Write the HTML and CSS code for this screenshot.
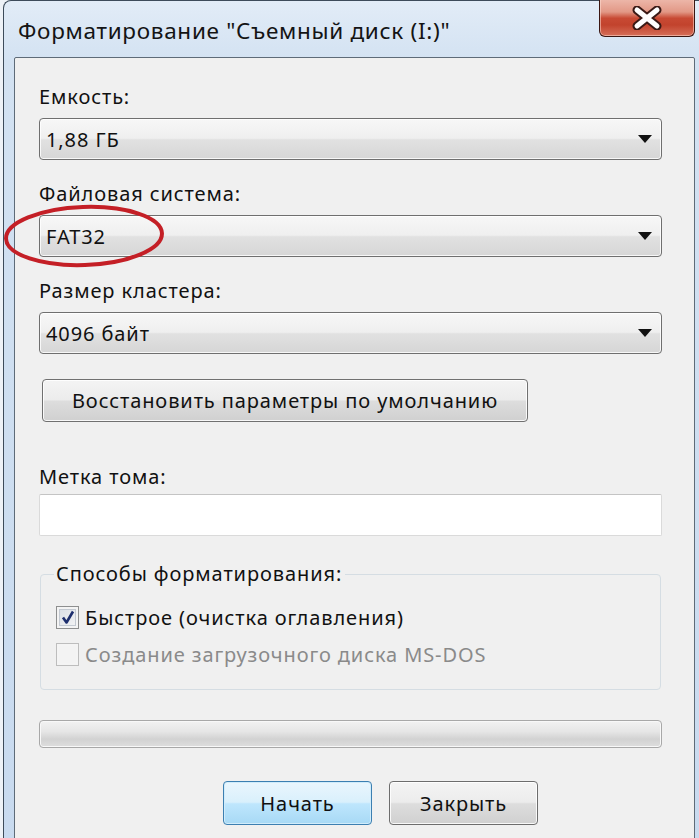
FILE: index.html
```html
<!DOCTYPE html>
<html lang="ru">
<head>
<meta charset="utf-8">
<title>Форматирование</title>
<link rel="stylesheet" href="styles.css">
</head>
<body>
<div class="window">
  <div class="titlebar">
    <div class="title">Форматирование "Съемный диск (I:)"</div>
    <div class="close">
      <svg width="32" height="24" viewBox="0 0 32 24">
        <path d="M6 4 L26 20 M26 4 L6 20" stroke="#3a1a16" stroke-width="9" stroke-linecap="round"/>
        <path d="M6 4 L26 20 M26 4 L6 20" stroke="#ffffff" stroke-width="5" stroke-linecap="round"/>
      </svg>
    </div>
  </div>
  <div class="panel">
    <div class="label first">Емкость:</div>
    <div class="combo"><span class="value">1,88 ГБ</span><span class="arrow"></span></div>

    <div class="label">Файловая система:</div>
    <div class="combo"><span class="value">FAT32</span><span class="arrow"></span></div>

    <div class="label">Размер кластера:</div>
    <div class="combo"><span class="value">4096 байт</span><span class="arrow"></span></div>

    <div class="btn restore">Восстановить параметры по умолчанию</div>

    <div class="label volume">Метка тома:</div>
    <div class="textbox"></div>

    <div class="group">
      <div class="legend">Способы форматирования:</div>
      <div class="check-row">
        <span class="checkbox checked">
          <svg width="16" height="16" viewBox="0 0 16 16">
            <path d="M3 8.5 L6.5 13.5 L13 2.5" fill="none" stroke="#1e2f6e" stroke-width="2.6" stroke-linejoin="round"/>
          </svg>
        </span>
        <span class="check-label">Быстрое (очистка оглавления)</span>
      </div>
      <div class="check-row disabled">
        <span class="checkbox"></span>
        <span class="check-label">Создание загрузочного диска MS-DOS</span>
      </div>
    </div>

    <div class="progress"></div>

    <div class="actions">
      <div class="btn action default">Начать</div>
      <div class="btn action">Закрыть</div>
    </div>

    <svg class="mark" width="166" height="68" viewBox="0 0 166 68">
      <ellipse cx="82" cy="32" rx="78" ry="29" fill="none" stroke="#c41f26" stroke-width="4" transform="rotate(-2 82 32)"/>
    </svg>
  </div>
</div>
</body>
</html>
```
FILE: styles.css
```css
html, body {
  margin: 0;
  padding: 0;
}
body {
  width: 699px;
  height: 838px;
  overflow: hidden;
  background: #eef2f7;
  font-family: "Noto Sans", "Open Sans", "DejaVu Sans", sans-serif;
  color: #111;
  letter-spacing: 0.9px;
}
.window {
  margin-left: 3px;
  height: 860px;
  border-left: 1px solid #3d4b5a;
  border-top: 1px solid #3d4b5a;
  border-top-left-radius: 8px;
  background: linear-gradient(180deg, #e2ecf7 0%, #d3e2f2 60px, #c8daef 100%);
  position: relative;
}
.titlebar {
  height: 56px;
  display: flex;
  align-items: center;
}
.title {
  padding-left: 14px;
  padding-top: 2px;
  font-size: 22.5px;
  letter-spacing: 0.7px;
  color: #141414;
  white-space: nowrap;
}
.close {
  margin-left: auto;
  margin-right: 4px;
  align-self: flex-start;
  margin-top: -2px;
  width: 96px;
  height: 38px;
  box-sizing: border-box;
  border: 1px solid #3a1612;
  border-top: none;
  border-radius: 0 0 6px 6px;
  background: linear-gradient(180deg, #edb8ab 0%, #e29886 35%, #c84a34 52%, #c2432d 70%, #d66f59 100%);
  box-shadow: inset 0 0 0 1px rgba(255, 220, 210, 0.55);
  display: flex;
  align-items: center;
  justify-content: center;
}
.panel {
  position: relative;
  margin-left: 10px;
  margin-right: 4px;
  height: 800px;
  border: 1px solid #5e6b78;
  border-radius: 2px 2px 0 0;
  background: #f0f0f0;
  padding: 27px 32px 0 24px;
  box-sizing: border-box;
}
.label {
  font-size: 20px;
  line-height: 24px;
  margin-top: 22px;
  margin-bottom: 9px;
}
.label.first {
  margin-top: 0;
}
.combo {
  height: 42px;
  box-sizing: border-box;
  border: 1px solid #6f6f6f;
  border-radius: 4px;
  background: linear-gradient(180deg, #f7f7f7 0%, #efefef 48%, #e1e1e1 52%, #d6d6d6 100%);
  box-shadow: inset 0 0 0 1px rgba(255, 255, 255, 0.8);
  display: flex;
  align-items: center;
  padding: 0 8px 0 6px;
}
.combo .value {
  font-size: 20px;
  flex: 1;
}
.arrow {
  width: 0;
  height: 0;
  border-left: 7px solid transparent;
  border-right: 7px solid transparent;
  border-top: 8px solid #111;
  margin-right: 1px;
}
.btn {
  box-sizing: border-box;
  border: 1px solid #707070;
  border-radius: 4px;
  background: linear-gradient(180deg, #f4f4f4 0%, #ececec 48%, #dddddd 52%, #d0d0d0 100%);
  box-shadow: inset 0 0 0 1px rgba(255, 255, 255, 0.85);
  font-size: 20px;
  display: flex;
  align-items: center;
  justify-content: center;
}
.restore {
  margin-top: 25px;
  margin-left: 3px;
  width: 486px;
  height: 43px;
}
.label.volume {
  margin-top: 43px;
  margin-bottom: 5px;
}
.textbox {
  height: 42px;
  box-sizing: border-box;
  background: #ffffff;
  border: 1px solid #dadada;
  border-top-color: #c4c4c4;
  border-radius: 2px;
}
.group {
  margin-top: 38px;
  margin-left: 1px;
  margin-right: 1px;
  height: 116px;
  box-sizing: border-box;
  border: 1px solid #d5dde3;
  border-radius: 4px;
  padding: 0 0 0 15px;
}
.legend {
  display: inline-block;
  font-size: 20px;
  line-height: 24px;
  background: #f0f0f0;
  margin-top: -13px;
  margin-left: -2px;
  padding: 0 3px 0 2px;
  vertical-align: top;
}
.check-row {
  display: flex;
  align-items: center;
  height: 24px;
  margin-top: 8px;
  font-size: 20px;
}
.check-row + .check-row {
  margin-top: 13px;
}
.checkbox {
  width: 23px;
  height: 23px;
  box-sizing: border-box;
  border: 1px solid #8e8f8f;
  background: linear-gradient(135deg, #d6dbe3 0%, #f6f6f6 100%);
  box-shadow: inset 0 0 0 2px #f4f4f4, inset 0 0 0 3px #c4cad2;
  margin-right: 6px;
  display: flex;
  align-items: center;
  justify-content: center;
}
.check-row.disabled .checkbox {
  border-color: #bdbdbd;
  background: #f3f3f3;
  box-shadow: inset 0 0 0 2px #f4f4f4;
}
.check-row.disabled .check-label {
  color: #8a8a8a;
}
.progress {
  margin-top: 30px;
  height: 28px;
  box-sizing: border-box;
  border: 1px solid #a8a8a8;
  border-radius: 4px;
  background: linear-gradient(180deg, #f2f2f2 0%, #e6e6e6 40%, #d2d2d2 70%, #dedede 100%);
  box-shadow: inset 0 0 0 1px #f8f8f8;
}
.actions {
  display: flex;
  gap: 17px;
  margin-top: 33px;
  padding-left: 184px;
}
.btn.action {
  width: 149px;
  height: 44px;
  border-color: #6d6d6d;
}
.btn.default {
  border-color: #3c7fb1;
  background: linear-gradient(180deg, #eaf6fd 0%, #d9f0fc 48%, #bee6fd 52%, #a7d9f5 100%);
  box-shadow: inset 0 0 0 1px #d0ecfb;
}
.mark {
  position: absolute;
  left: -13px;
  top: 146px;
}
```
